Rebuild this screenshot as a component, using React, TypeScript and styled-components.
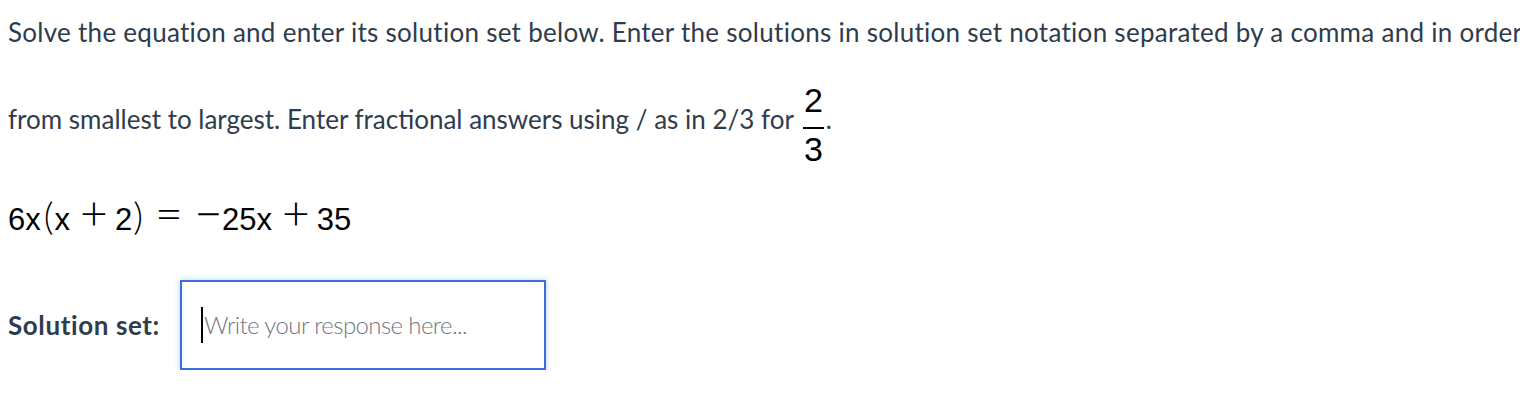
import React from "react";
import styled, { createGlobalStyle } from "styled-components";

const Global = createGlobalStyle`
  html, body { margin: 0; padding: 0; background: #ffffff; overflow: hidden; }
  body { font-family: "Lato", "Open Sans", sans-serif; }
`;

const Page = styled.div`
  padding: 0 8px;
  width: 1520px;
  box-sizing: border-box;
  color: #2f3c4c;
`;

const Prose = styled.div`
  font-size: 26px;
  white-space: nowrap;
`;

const FirstLine = styled.div`
  margin-top: 14px;
  line-height: 36px;
  height: 36px;
  letter-spacing: 0.28px;
`;

const SecondLine = styled.div`
  margin-top: 33px;
  height: 87px;
  display: flex;
  align-items: flex-start;
`;

const LineText = styled.span<{ $offset: number }>`
  line-height: 36px;
  margin-top: ${(p) => p.$offset}px;
`;

const Fraction = styled.span`
  display: inline-flex;
  flex-direction: column;
  align-items: center;
  margin-left: 9px;
  margin-right: 2px;
  font-family: "Liberation Sans", Arial, sans-serif;
  font-size: 34px;
  color: #000000;
`;

const FracPart = styled.span<{ $gap: number }>`
  line-height: 34px;
  padding: 0 1px;
  margin-top: ${(p) => p.$gap}px;
`;

const FracBar = styled.span`
  align-self: stretch;
  height: 1.5px;
  background: #000000;
  margin-top: 10px;
`;

const Equation = styled.div`
  margin-top: 24px;
  font-family: "Liberation Sans", Arial, sans-serif;
  font-size: 31px;
  line-height: 36px;
  height: 36px;
  color: #000000;
  display: flex;
  align-items: baseline;
  white-space: nowrap;
`;

const Term = styled.span``;

const Paren = styled.span<{ $left: number; $right: number }>`
  font-family: "Lato", sans-serif;
  font-weight: 300;
  font-size: 38px;
  margin: 0 ${(p) => p.$right}px 0 ${(p) => p.$left}px;
`;

const Op = styled.span<{ $left: number; $right: number }>`
  font-family: "Lato", sans-serif;
  font-weight: 300;
  font-size: 48px;
  margin: 0 ${(p) => p.$right}px 0 ${(p) => p.$left}px;
`;

const Minus = styled(Op)`
  font-family: "Open Sans", sans-serif;
  font-size: 44px;
`;

const AnswerRow = styled.div`
  margin-top: 50px;
  display: flex;
  align-items: center;
`;

const Label = styled.span`
  flex: 0 0 172px;
  font-size: 26px;
  font-weight: 700;
  line-height: 36px;
  letter-spacing: 0.6px;
`;

const ResponseBox = styled.div`
  box-sizing: border-box;
  width: 366px;
  height: 90px;
  border: 2px solid #3a6fd8;
  box-shadow: 0 0 6px rgba(58, 111, 216, 0.35);
  display: flex;
  align-items: center;
  padding-left: 19px;
  background: #ffffff;
`;

const Caret = styled.span`
  width: 2px;
  height: 36px;
  background: #000000;
  margin-right: 1px;
`;

const Placeholder = styled.span`
  font-size: 24px;
  font-weight: 300;
  line-height: 36px;
  letter-spacing: -0.6px;
  color: #6f7683;
  white-space: nowrap;
`;

export default function App() {
  return (
    <>
      <Global />
      <Page>
        <Prose>
          <FirstLine>
            Solve the equation and enter its solution set below. Enter the solutions in solution set notation separated by a comma and in order
          </FirstLine>
          <SecondLine>
            <LineText $offset={18}>
              from smallest to largest. Enter fractional answers using / as in 2/3 for
            </LineText>
            <Fraction>
              <FracPart $gap={0}>2</FracPart>
              <FracBar />
              <FracPart $gap={3}>3</FracPart>
            </Fraction>
            <LineText $offset={18}>.</LineText>
          </SecondLine>
        </Prose>
        <Equation>
          <Term>6x</Term>
          <Paren $left={3} $right={1}>(</Paren>
          <Term>x</Term>
          <Op $left={10} $right={7}>+</Op>
          <Term>2</Term>
          <Paren $left={1} $right={0}>)</Paren>
          <Op $left={12} $right={13}>=</Op>
          <Minus $left={0} $right={1}>−</Minus>
          <Term>25x</Term>
          <Op $left={10} $right={7}>+</Op>
          <Term>35</Term>
        </Equation>
        <AnswerRow>
          <Label>Solution set:</Label>
          <ResponseBox>
            <Caret />
            <Placeholder>Write your response here...</Placeholder>
          </ResponseBox>
        </AnswerRow>
      </Page>
    </>
  );
}
